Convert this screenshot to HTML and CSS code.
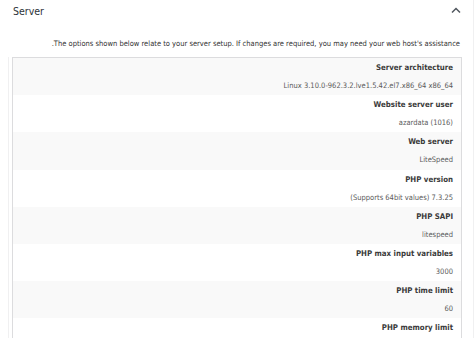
FILE: index.html
```html
<!DOCTYPE html>
<html lang="en">
<head>
  <meta charset="UTF-8" />
  <title>Site Health - Server</title>
  <link rel="stylesheet" href="styles.css">
</head>
<body>

  <div class="panel">
    <!-- Section header -->
    <div class="panel-head">
      <span class="panel-title">Server</span>
      <svg class="chevron" width="12" height="8" viewBox="0 0 12 8">
        <polyline points="2,6.5 6,2.5 10,6.5" fill="none" stroke="#50575e" stroke-width="1.5"/>
      </svg>
    </div>

    <p class="intro">.The options shown below relate to your server setup. If changes are required, you may need your web host's assistance</p>

    <!-- Info table -->
    <div class="table-wrap">
      <div class="info-table">
        <div class="info-row"><div class="info-label">Server architecture</div><div class="info-value">Linux 3.10.0-962.3.2.lve1.5.42.el7.x86_64 x86_64</div></div>
        <div class="info-row"><div class="info-label">Website server user</div><div class="info-value">azardata (1016)</div></div>
        <div class="info-row"><div class="info-label">Web server</div><div class="info-value">LiteSpeed</div></div>
        <div class="info-row"><div class="info-label">PHP version</div><div class="info-value">(Supports 64bit values) 7.3.25</div></div>
        <div class="info-row"><div class="info-label">PHP SAPI</div><div class="info-value">litespeed</div></div>
        <div class="info-row"><div class="info-label">PHP max input variables</div><div class="info-value">3000</div></div>
        <div class="info-row"><div class="info-label">PHP time limit</div><div class="info-value">60</div></div>
        <div class="info-row"><div class="info-label">PHP memory limit</div></div>
      </div>
    </div>
  </div>

</body>
</html>
```

FILE: styles.css
```css
* {
  box-sizing: border-box;
  margin: 0;
  padding: 0;
}

body {
  background-color: #fff;
  color: #3c434a;
  font-family: 'DejaVu Sans Condensed', 'Liberation Sans', sans-serif;
  font-size: 7.5px;
  overflow: hidden;
}

.panel {
  width: 474px;
  height: 338px;
  border-right: 1px solid #f0f0f1;
  overflow: hidden;
}

.panel-head {
  display: flex;
  justify-content: space-between;
  align-items: center;
  height: 22px;
  padding: 0 11px 0 13px;
}

.panel-title {
  font-size: 10.5px;
  color: #2c3338;
}

.chevron {
  margin-top: -2px;
}

.intro {
  padding: 13px 13px 0 0;
  line-height: 18px;
  text-align: right;
  color: #333;
}

.table-wrap {
  margin: 4px 0 0 8px;
  padding-left: 3px;
  border-left: 1px solid #f0f0f1;
}

.info-table {
  width: 450px;
  border: 1px solid #dcdcde;
  border-bottom: none;
}

.info-row {
  height: 37.2px;
  padding: 1px 8px 0;
  text-align: right;
  line-height: 18px;
}

.info-row:nth-child(odd) {
  background-color: #f9f9f9;
}

.info-label {
  font-size: 7.8px;
  font-weight: bold;
  color: #3a3a3a;
}

.info-value {
  color: #5a5a5a;
}
```
